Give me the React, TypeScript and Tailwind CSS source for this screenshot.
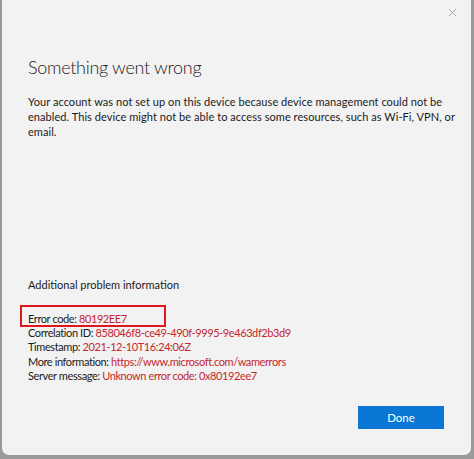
import { X } from 'lucide-react';

const details: [string, string][] = [
  ['Correlation ID:', '858046f8-ce49-490f-9995-9e463df2b3d9'],
  ['Timestamp:', '2021-12-10T16:24:06Z'],
  ['More information:', 'https://www.microsoft.com/wamerrors'],
  ['Server message:', 'Unknown error code: 0x80192ee7'],
];

export default function App() {
  return (
    <div className="h-[459px] w-[474px] bg-[#9a9a9a] pl-[2px] pr-[3px] font-['Lato',sans-serif] text-[#1b1b1b]">
      <div className="relative flex h-[455px] flex-col rounded-b-[7px] bg-[#f2f2f2] pl-[26px] pr-[14px]">
        <button className="absolute right-[12px] top-[6px] text-[#8a8a8a]">
          <X size={13} strokeWidth={1.3} />
        </button>

        <h1 className="mt-[54px] text-[18px] font-light leading-[26px] tracking-[-0.3px]">Something went wrong</h1>

        <p className="mt-[14px] text-[11px] leading-[15px] tracking-[0.06px]">
          Your account was not set up on this device because device management could not be enabled. This device might not be able to access some resources, such as Wi-Fi, VPN, or email.
        </p>

        <p className="mt-[138px] text-[11px] leading-[15px]">Additional problem information</p>

        <div className="mt-[20px] text-[11px] leading-[14.2px] tracking-[-0.4px]">
          <div className="relative">
            <span>Error code: </span>
            <span className="text-[#c4262e]">80192EE7</span>
            <div className="absolute -left-[8px] -top-[7px] h-[22px] w-[146px] border-2 border-[#e0161f]" />
          </div>
          {details.map(([label, value]) => (
            <div key={label}>
              <span>{label} </span>
              <span className="text-[#c4262e]">{value}</span>
            </div>
          ))}
        </div>

        <div className="mt-auto mb-[26px] flex justify-end">
          <button className="mr-[13px] h-[23px] w-[86px] bg-[#0a76d6] text-[11.5px] text-white">Done</button>
        </div>
      </div>
    </div>
  );
}
